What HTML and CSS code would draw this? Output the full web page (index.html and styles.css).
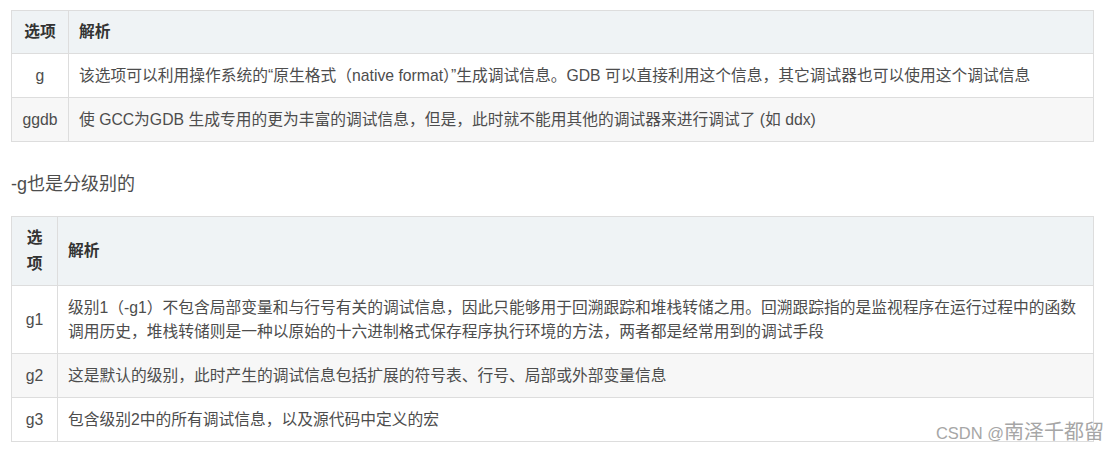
FILE: index.html
```html
<!DOCTYPE html>
<html lang="zh-CN">
<head>
<meta charset="utf-8">
<link rel="stylesheet" href="styles.css">
</head>
<body>
<div class="page">
  <table class="tbl tbl-one">
    <thead>
      <tr><th class="opt">选项</th><th>解析</th></tr>
    </thead>
    <tbody>
      <tr><td class="opt">g</td><td>该选项可以利用操作系统的“原生格式（native format）”生成调试信息。GDB 可以直接利用这个信息，其它调试器也可以使用这个调试信息</td></tr>
      <tr><td class="opt">ggdb</td><td>使 GCC为GDB 生成专用的更为丰富的调试信息，但是，此时就不能用其他的调试器来进行调试了 (如 ddx)</td></tr>
    </tbody>
  </table>
  <p class="para">-g也是分级别的</p>
  <table class="tbl tbl-two">
    <thead>
      <tr><th class="opt">选项</th><th>解析</th></tr>
    </thead>
    <tbody>
      <tr><td class="opt">g1</td><td>级别1（-g1）不包含局部变量和与行号有关的调试信息，因此只能够用于回溯跟踪和堆栈转储之用。回溯跟踪指的是监视程序在运行过程中的函数调用历史，堆栈转储则是一种以原始的十六进制格式保存程序执行环境的方法，两者都是经常用到的调试手段</td></tr>
      <tr><td class="opt">g2</td><td>这是默认的级别，此时产生的调试信息包括扩展的符号表、行号、局部或外部变量信息</td></tr>
      <tr><td class="opt">g3</td><td>包含级别2中的所有调试信息，以及源代码中定义的宏</td></tr>
    </tbody>
  </table>
  <div class="watermark"><span class="wm-latin">CSDN @</span><span class="wm-cjk">南泽千都留</span></div>
</div>
</body>
</html>
```

FILE: styles.css
```css
html, body {
  margin: 0;
  padding: 0;
  background: #ffffff;
}

body {
  font-family: "Liberation Sans", "Noto Sans CJK SC", sans-serif;
  color: #4d4d4d;
}

.page {
  position: relative;
  width: 1118px;
  height: 452px;
  padding: 10px 0 0 11px;
  box-sizing: border-box;
}

.tbl {
  width: 1083px;
  border-collapse: collapse;
  table-layout: fixed;
  font-size: 15.75px;
}

.tbl th,
.tbl td {
  border: 1px solid #dddddd;
  padding: 9.5px 10px;
  line-height: 24px;
  text-align: left;
  vertical-align: middle;
  color: #4d4d4d;
}

.tbl th {
  background: #eff3f5;
  font-weight: bold;
  color: #333333;
  padding: 8px 10px;
  line-height: 26px;
}

.tbl .opt {
  text-align: center;
}

.tbl-one .opt {
  width: 36px;
}

.tbl-two .opt {
  width: 25px;
}

.tbl tbody tr:nth-child(2) td {
  background: #f7f7f7;
}

.para {
  margin: 29px 0 19px 0;
  font-size: 18px;
  line-height: 26px;
  color: #4d4d4d;
}

.watermark {
  position: absolute;
  right: 14px;
  top: 420px;
  color: #a6a6a6;
  line-height: 24px;
  white-space: nowrap;
}

.wm-latin {
  font-size: 16.5px;
}

.wm-cjk {
  font-size: 20px;
}
```
